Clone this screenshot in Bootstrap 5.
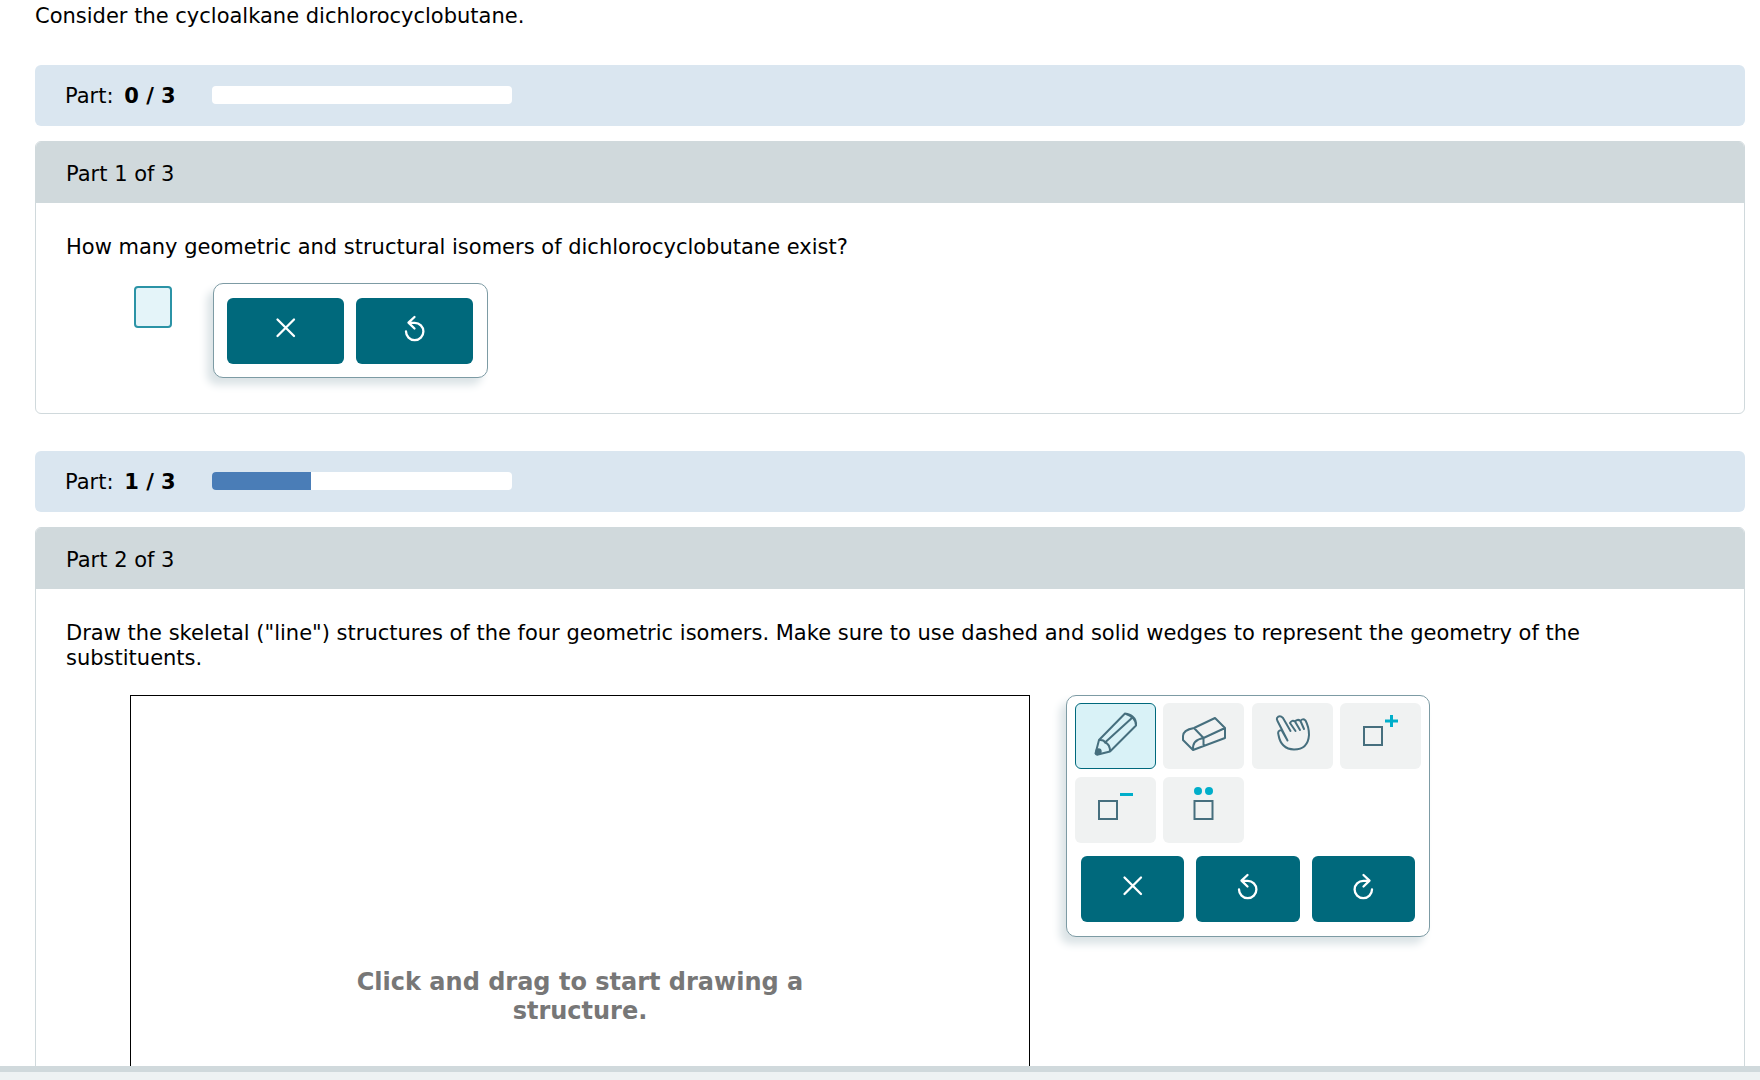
<!DOCTYPE html>
<html lang="en">
<head>
<meta charset="utf-8">
<meta name="viewport" content="width=device-width, initial-scale=1">
<title>Dichlorocyclobutane isomers</title>
<link href="https://cdn.jsdelivr.net/npm/bootstrap@5.3.0/dist/css/bootstrap.min.css" rel="stylesheet">
<style>
  body { font-family: Verdana, "DejaVu Sans", sans-serif; font-size: 21px; line-height: 25px; color: #000; }
  .question-scroll { min-height: 0; padding: 4px 15px 0 35px; overflow-y: auto; scrollbar-width: none; }
  .question-scroll::-webkit-scrollbar { display: none; }
  .intro { margin-bottom: 36px; }
  .part-bar { background: #dae6f0; border-radius: 6px; height: 61px; padding: 0 30px; gap: 30px; margin-bottom: 15px; }
  .part-label { min-width: 117px; padding-top: 2px; }
  .part-bar .progress { --bs-progress-bg: #fff; --bs-progress-height: 18px; --bs-progress-border-radius: 4px; --bs-progress-bar-bg: #4a7db7; width: 300px; margin-bottom: 2px; }
  .part-card { --bs-card-border-color: #d0d9dc; --bs-card-border-radius: 6px; --bs-card-inner-border-radius: 5px; margin-bottom: 37px; color: #000; }
  .part-card .card-header { background: #d0d9dc; border: 0; padding: 20px 30px 16px; }
  .part-card .card-body { padding: 32px 30px 35px; }
  .answer-row { padding-left: 68px; gap: 41px; margin-top: 23px; }
  .answer-box { width: 38px; height: 42px; margin-top: 3px; padding: 0; border: 2px solid #2b93a6; border-radius: 4px; background: #e4f4f9; text-align: center; }
  .tool-panel { border: 1px solid #7d9ba4; border-radius: 10px; background: #fff; box-shadow: -6px 7px 9px #dbe3e6; }
  .answer-tools { padding: 14px 14px 13px 13px; gap: 12px; }
  .action-btn { --bs-btn-bg: #00697c; --bs-btn-hover-bg: #00586a; --bs-btn-active-bg: #004c5c; --bs-btn-border-radius: 6px; height: 66px; padding: 0 0 6px; border: 0; }
  .answer-tools .action-btn { width: 117px; }
  .draw-row { padding-left: 64px; gap: 36px; margin-top: 24px; }
  .draw-canvas { width: 900px; height: 600px; padding-top: 4px; border: 1px solid #000; color: #777; font-size: 24px; font-weight: 700; line-height: 29px; }
  .draw-canvas p { width: 450px; }
  .draw-tools { width: 364px; padding: 7px 8px 14px; }
  .tile-grid { display: grid; grid-template-columns: repeat(4, 81px); justify-content: space-between; row-gap: 8px; }
  .tile-btn { --bs-btn-bg: #f0f2f2; --bs-btn-hover-bg: #e4e9ea; --bs-btn-active-bg: #d9f2f7; --bs-btn-active-border-color: #00697c; --bs-btn-border-radius: 6px; height: 66px; padding: 0; }
  .action-row { padding: 0 6px; margin-top: 13px; gap: 12px; }
  .foot-strip { height: 14px; border-top: 6px solid #d0d9dc; background: #eef2f3; }
  svg { display: block; margin: auto; fill: none; stroke-linecap: round; stroke-linejoin: round; }
  .tile-btn svg { stroke: #466f7e; stroke-width: 2; }
  .action-btn svg { stroke: #fff; stroke-width: 2.3; }
</style>
</head>
<body class="vh-100 overflow-hidden d-flex flex-column">
<svg width="0" height="0" class="position-absolute" aria-hidden="true">
  <symbol id="ic-clear" viewBox="0 0 30 30"><path d="M6.500 6.500L23 23M23 6.500L6.500 23"/></symbol>
  <symbol id="ic-undo" viewBox="0 0 30 30"><path d="M6 18.500A8.700 8.700 0 1 0 14.700 9.800H8.500M14.500 4L8.500 9.700L14.500 15.500"/></symbol>
  <symbol id="ic-redo" viewBox="0 0 30 30"><path d="M24 18.500A8.700 8.700 0 1 1 15.300 9.800H21.500M15.500 4L21.500 9.700L15.500 15.500"/></symbol>
</svg>

<main class="question-scroll flex-grow-1">
  <p class="intro">Consider the cycloalkane dichlorocyclobutane.</p>

  <div class="part-bar d-flex align-items-center">
    <span class="part-label">Part: <strong class="ms-1">0 / 3</strong></span>
    <div class="progress" role="progressbar" aria-label="Parts completed" aria-valuenow="0" aria-valuemin="0" aria-valuemax="3"><div class="progress-bar" style="width: 0%"></div></div>
  </div>
  <section class="card part-card">
    <div class="card-header">Part 1 of 3</div>
    <div class="card-body">
      <label for="answer" class="d-block">How many geometric and structural isomers of dichlorocyclobutane exist?</label>
      <div class="answer-row d-flex align-items-start">
        <input id="answer" class="answer-box" type="text" autocomplete="off">
        <div class="tool-panel answer-tools d-flex">
          <button type="button" class="btn action-btn" aria-label="Clear"><svg width="30" height="30"><use href="#ic-clear"/></svg></button>
          <button type="button" class="btn action-btn" aria-label="Undo"><svg width="30" height="30"><use href="#ic-undo"/></svg></button>
        </div>
      </div>
    </div>
  </section>

  <div class="part-bar d-flex align-items-center">
    <span class="part-label">Part: <strong class="ms-1">1 / 3</strong></span>
    <div class="progress" role="progressbar" aria-label="Parts completed" aria-valuenow="1" aria-valuemin="0" aria-valuemax="3"><div class="progress-bar" style="width: 33%"></div></div>
  </div>
  <section class="card part-card">
    <div class="card-header">Part 2 of 3</div>
    <div class="card-body">
      <p class="mb-0">Draw the skeletal ("line") structures of the four geometric isomers. Make sure to use dashed and solid wedges to represent the geometry of the substituents.</p>
      <div class="draw-row d-flex align-items-start">
        <div class="draw-canvas d-flex align-items-center justify-content-center text-center">
          <p class="mb-0">Click and drag to start drawing a structure.</p>
        </div>
        <div class="tool-panel draw-tools">
          <div class="tile-grid">
            <button type="button" class="btn tile-btn active" aria-label="Draw" aria-pressed="true"><svg width="79" height="64"><path d="M49 9.500L23 36L19.500 49.500Q20 51 22 50.500L34 47.500L60 21.500Q60 13 49 9.500ZM57 13L29 38.500M23 36Q28 35.500 29 38.500Q34 40 34 47.500M49 9.500Q54 10 57 13Q60.500 16 60 21.500"/><circle cx="22.500" cy="47.500" r="2.200" fill="#466f7e"/></svg></button>
            <button type="button" class="btn tile-btn" aria-label="Erase"><svg width="79" height="64"><path d="M30 24L51 14L61 24V34L29 46L19 36V32Q19 26 30 24ZM30 24L39.500 34L61 24M39.500 34V41M29 46Q28 36 39.500 34"/></svg></button>
            <button type="button" class="btn tile-btn" aria-label="Select"><svg width="79" height="64"><path d="M34.500 36.500L28.500 26Q24 26.500 25.500 31Q28 45 41 45.500Q55 45.500 56 31Q56 23 52.500 16.500Q49.500 14 47.500 17Q44.500 14.500 42 17.500Q39 15.500 37 19M37.500 27L30 14Q26.500 10.500 24 14Q23.500 15 24.500 17L34.500 36.500M37 19L42.500 27M42 17.500L47 26M47.500 17L51 25"/></svg></button>
            <button type="button" class="btn tile-btn" aria-label="Add charge"><svg width="79" height="64"><g stroke-linecap="butt" stroke-linejoin="miter"><rect x="23" y="23" width="18" height="18"/><path d="M44 17H57M50.500 11V23" stroke="#00aeca" stroke-width="3"/></g></svg></button>
            <button type="button" class="btn tile-btn" aria-label="Remove charge"><svg width="79" height="64"><g stroke-linecap="butt" stroke-linejoin="miter"><rect x="23" y="23" width="18" height="18"/><path d="M44 16.500H57" stroke="#00aeca" stroke-width="3"/></g></svg></button>
            <button type="button" class="btn tile-btn" aria-label="Lone pair"><svg width="79" height="64"><rect x="30.500" y="23" width="18" height="18" stroke-linejoin="miter"/><g fill="#00aeca" stroke="none"><circle cx="34" cy="13" r="4"/><circle cx="45" cy="13" r="4"/></g></svg></button>
          </div>
          <div class="action-row d-flex">
            <button type="button" class="btn action-btn flex-fill" aria-label="Clear"><svg width="30" height="30"><use href="#ic-clear"/></svg></button>
            <button type="button" class="btn action-btn flex-fill" aria-label="Undo"><svg width="30" height="30"><use href="#ic-undo"/></svg></button>
            <button type="button" class="btn action-btn flex-fill" aria-label="Redo"><svg width="30" height="30"><use href="#ic-redo"/></svg></button>
          </div>
        </div>
      </div>
    </div>
  </section>
</main>
<footer class="foot-strip flex-shrink-0"></footer>
<script src="https://cdn.jsdelivr.net/npm/bootstrap@5.3.0/dist/js/bootstrap.bundle.min.js"></script>
</body>
</html>
